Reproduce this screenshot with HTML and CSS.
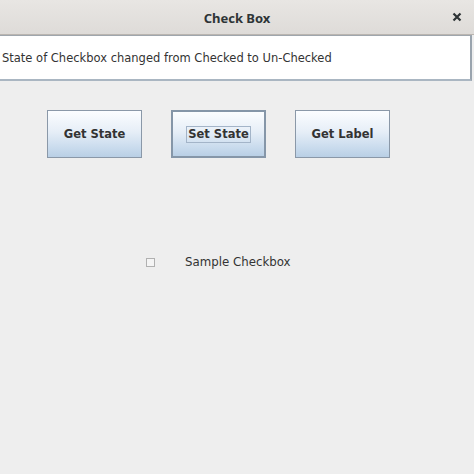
FILE: index.html
```html
<!DOCTYPE html>
<html>
<head>
<meta charset="utf-8">
<link rel="stylesheet" href="styles.css">
</head>
<body>
<div class="window">
  <div class="titlebar">
    <span class="title">Check Box</span>
    <svg class="close" width="10" height="10" viewBox="0 0 10 10"><path d="M1.5 1.5 L8.5 8.5 M8.5 1.5 L1.5 8.5" stroke="#2e3436" stroke-width="2.2" stroke-linecap="butt"/></svg>
  </div>
  <div class="field">State of Checkbox changed from Checked to Un-Checked</div>
  <div class="buttons">
    <div class="btn">Get State</div>
    <div class="btn focused"><span class="focus">Set State</span></div>
    <div class="btn">Get Label</div>
  </div>
  <div class="checkrow">
    <span class="box"></span>
    <span class="label">Sample Checkbox</span>
  </div>
</div>
</body>
</html>
```

FILE: styles.css
```css
html, body {
  margin: 0;
  padding: 0;
  width: 474px;
  height: 474px;
  overflow: hidden;
  background: #eeeeee;
}
.window {
  width: 474px;
  height: 474px;
  display: flex;
  flex-direction: column;
  background: #eeeeee;
  font-family: "DejaVu Sans", sans-serif;
  color: #333333;
}
.titlebar {
  height: 34px;
  flex: none;
  background: linear-gradient(#e8e6e3, #dedbd8);
  border-bottom: 1px solid #bab5b0;
  display: flex;
  align-items: center;
  justify-content: center;
  position: relative;
}
.title {
  font-family: "Noto Sans", sans-serif;
  font-weight: bold;
  font-size: 13px;
  color: #2e3436;
  margin-top: 1px;
}
.close {
  position: absolute;
  right: 12px;
  top: 12px;
}
.field {
  flex: none;
  height: 46px;
  width: 472px;
  box-sizing: border-box;
  background: #ffffff;
  border-top: 1px solid #9fa6ad;
  border-right: 2px solid #9aa4ae;
  border-bottom: 2px solid #aab6c2;
  padding-left: 2px;
  display: flex;
  align-items: center;
  font-size: 11.5px;
  color: #333333;
}
.buttons {
  display: flex;
  gap: 29px;
  padding-left: 47px;
  margin-top: 29px;
}
.btn {
  width: 95px;
  height: 48px;
  box-sizing: border-box;
  border: 1px solid #8a98a8;
  background: linear-gradient(#fbfdff 0%, #e6eef7 45%, #c9dbed 80%, #b9cfe5 100%);
  display: flex;
  align-items: center;
  justify-content: center;
  font-weight: bold;
  font-size: 11.5px;
  color: #333333;
}
.btn.focused {
  border: 2px solid #8596a8;
}
.focus {
  border: 1px solid #a3b4c8;
  padding: 1px 1px;
  line-height: 13px;
}
.checkrow {
  display: flex;
  align-items: center;
  margin-top: 94px;
  padding-left: 146px;
  height: 20px;
}
.box {
  width: 9px;
  height: 9px;
  box-sizing: border-box;
  border: 1px solid #b0b0b0;
  background: #f4f4f4;
  margin-right: 30px;
}
.label {
  font-size: 11.8px;
  color: #333333;
}
```
